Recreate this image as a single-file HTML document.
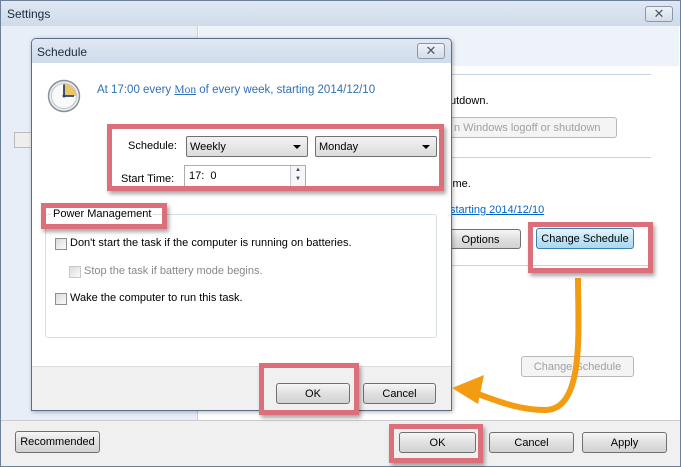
<!DOCTYPE html>
<html><head><style>
*{box-sizing:border-box;margin:0;padding:0}
body{width:681px;height:467px;position:relative;overflow:hidden;background:#fff;font-family:"Liberation Sans",sans-serif;font-size:11px;color:#000}
.a{position:absolute}
.btn{position:absolute;border:1px solid #707070;border-radius:3px;background:linear-gradient(#f6f6f6,#e0e0e0 50%,#d2d2d2);text-align:center;font-size:11px;line-height:20px}
.dis{border-color:#b8b8b8;background:#f4f4f4;color:#a0a0a0}
.red{position:absolute;border:5px solid #dc707a;box-shadow:2px 3px 4px rgba(0,0,0,.35)}
.cb{position:absolute;width:12px;height:12px;border:1px solid #8e8f8f;background:linear-gradient(135deg,#dcdcdc,#fafafa)}
.dd{position:absolute;border:1px solid #707070;border-radius:2px;background:linear-gradient(#f2f2f2,#dcdcdc);font-size:11px;line-height:20px;padding-left:3px}
.dd:after{content:"";position:absolute;right:6px;top:8px;border:4px solid transparent;border-top:4px solid #000}
.xb{position:absolute;width:28px;height:16px;border:1px solid #8a97a8;border-radius:3px;background:linear-gradient(#eef2f7,#d5dde8);color:#4a5868;font-size:13px;line-height:13px;text-align:center}
</style></head><body>
<div class="a" style="left:0;top:0;width:681px;height:467px;border:1px solid #6b7f96;background:#fff"></div>
<div class="a" style="left:1px;top:1px;width:679px;height:25px;background:linear-gradient(#dfe8f3,#cfdbea)"></div>
<div class="a" style="left:7px;top:7px;font-size:12px;color:#1a2a3a">Settings</div>
<div class="xb" style="left:645px;top:6px">✕</div>
<div class="a" style="left:1px;top:26px;width:197px;height:394px;background:#e7eef8;border-right:1px solid #c6d3e3"></div>
<div class="a" style="left:199px;top:26px;width:480px;height:40px;background:#eef3fa"></div>
<div class="a" style="left:14px;top:132px;width:20px;height:16px;border:1px solid #bbb;background:#eee"></div>
<div class="a" style="left:1px;top:420px;width:679px;height:46px;background:#f0f0f0;border-top:1px solid #ccc"></div>
<div class="a" style="left:450px;top:74px;width:201px;height:1px;background:#c6d3e3"></div>
<div class="a" style="left:450px;top:95px">utdown.</div>
<div class="btn dis" style="left:440px;top:117px;width:177px;height:21px;padding-left:13px;text-align:left">n Windows logoff or shutdown</div>
<div class="a" style="left:450px;top:157px;width:201px;height:1px;background:#c6d3e3"></div>
<div class="a" style="left:450px;top:178px">ime.</div>
<div class="a" style="left:450px;top:204px;color:#0066cc;text-decoration:underline">starting 2014/12/10</div>
<div class="btn" style="left:440px;top:229px;width:81px;height:20px">Options</div>
<div class="btn" style="left:536px;top:228px;width:98px;height:21px;border-color:#3c7fb1;background:linear-gradient(#e5f4fc,#c4e5f6 50%,#a9d8f1)">Change Schedule</div>
<div class="a" style="left:450px;top:265px;width:201px;height:1px;background:#c6d3e3"></div>
<div class="btn dis" style="left:521px;top:356px;width:113px;height:21px">Change Schedule</div>
<div class="btn" style="left:15px;top:431px;width:85px;height:22px">Recommended</div>
<div class="btn" style="left:399px;top:432px;width:77px;height:21px">OK</div>
<div class="btn" style="left:489px;top:432px;width:85px;height:21px">Cancel</div>
<div class="btn" style="left:582px;top:432px;width:85px;height:21px">Apply</div>
<div class="a" style="left:31px;top:38px;width:421px;height:373px;border:1px solid #5d6f85;border-radius:5px 5px 0 0;background:#fff;box-shadow:1px 1px 4px rgba(0,0,0,.3)"></div>
<div class="a" style="left:32px;top:39px;width:419px;height:24px;background:linear-gradient(#dfe8f3,#d0dceb);border-radius:4px 4px 0 0"></div>
<div class="a" style="left:37px;top:45px;font-size:12px;color:#1a2a3a">Schedule</div>
<div class="xb" style="left:417px;top:43px">✕</div>
<svg class="a" style="left:47px;top:79px" width="34" height="34" viewBox="0 0 34 34">
<circle cx="17" cy="17" r="15.5" fill="#e8ecef" stroke="#8a939b" stroke-width="1.5"/>
<circle cx="17" cy="17" r="12.5" fill="#fafafa" stroke="#c2c8cc"/>
<path d="M17 17L17 4.5A12.5 12.5 0 0 1 29.5 17Z" fill="#e9c56a"/>
<path d="M17 5.5V17H27" stroke="#2a4470" stroke-width="1.8" fill="none"/>
<circle cx="17" cy="17" r="1.5" fill="#2a4470"/>
</svg>
<div class="a" style="left:97px;top:84px;font-size:11.5px;color:#2f6fb5">At 17:00 every <span style="font-family:'Liberation Serif',serif;text-decoration:underline">Mon</span> of every week, starting 2014/12/10</div>
<div class="a" style="left:128px;top:140px">Schedule:</div>
<div class="dd" style="left:186px;top:136px;width:122px;height:21px">Weekly</div>
<div class="dd" style="left:315px;top:136px;width:122px;height:21px">Monday</div>
<div class="a" style="left:121px;top:173px">Start Time:</div>
<div class="a" style="left:184px;top:165px;width:122px;height:22px;border:1px solid #abadb3;padding:4px 0 0 4px">17: &nbsp;0</div>
<div class="a" style="left:290px;top:166px;width:15px;height:20px;border-left:1px solid #ccc;background:#f4f6fa;font-size:6px;line-height:9px;text-align:center;color:#445">▲<br>▼</div>
<div class="a" style="left:45px;top:214px;width:392px;height:124px;border:1px solid #d5dfe5;border-radius:3px"></div>
<div class="a" style="left:51px;top:208px;background:#fff;padding:0 2px">Power Management</div>
<div class="cb" style="left:55px;top:238px"></div>
<div class="a" style="left:70px;top:237px">Don't start the task if the computer is running on batteries.</div>
<div class="cb" style="left:69px;top:266px;border-color:#c8c8c8"></div>
<div class="a" style="left:84px;top:265px;color:#888">Stop the task if battery mode begins.</div>
<div class="cb" style="left:55px;top:293px"></div>
<div class="a" style="left:70px;top:292px">Wake the computer to run this task.</div>
<div class="a" style="left:32px;top:366px;width:419px;height:44px;background:#f0f0f0;border-top:1px solid #ddd"></div>
<div class="btn" style="left:276px;top:383px;width:74px;height:21px">OK</div>
<div class="btn" style="left:363px;top:383px;width:73px;height:21px">Cancel</div>
<svg class="a" style="left:0;top:0" width="681" height="467">
<path d="M578 278 C578 330,585 410,545 410 C520 410,500 402,478 394" stroke="#f39c12" stroke-width="6" fill="none"/>
<path d="M452 388 L484 375 L478 404 Z" fill="#f39c12"/>
</svg>
<div class="red" style="left:107px;top:124px;width:337px;height:67px"></div>
<div class="red" style="left:41px;top:203px;width:126px;height:26px"></div>
<div class="red" style="left:259px;top:363px;width:100px;height:52px"></div>
<div class="red" style="left:389px;top:424px;width:94px;height:39px"></div>
<div class="red" style="left:528px;top:222px;width:125px;height:51px"></div>
</body></html>
